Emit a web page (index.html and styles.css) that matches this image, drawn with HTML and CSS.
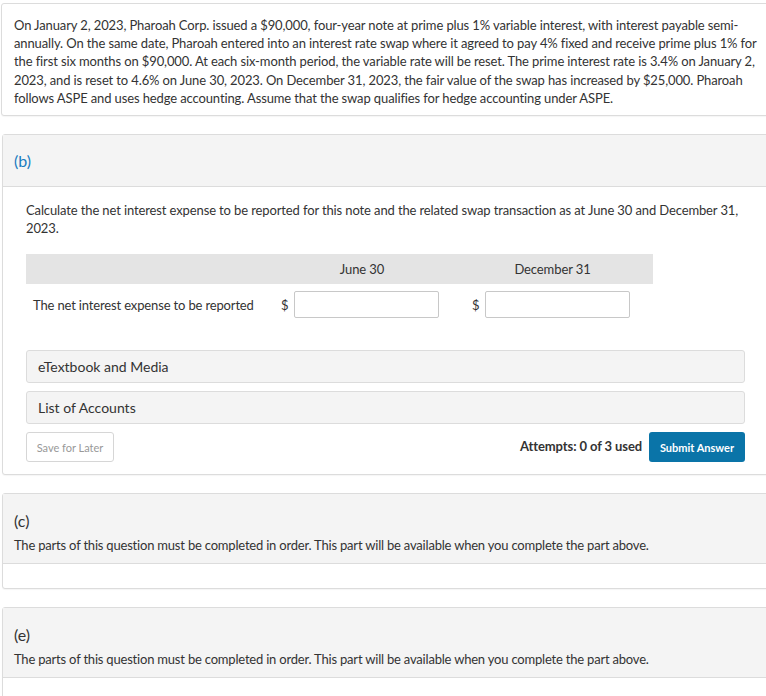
FILE: index.html
```html
<!DOCTYPE html>
<html>
<head>
<meta charset="utf-8">
<link rel="stylesheet" href="styles.css">
</head>
<body>
<div class="page">
  <div class="card intro">
    On January 2, 2023, Pharoah Corp. issued a $90,000, four-year note at prime plus 1% variable interest, with interest payable semi-annually. On the same date, Pharoah entered into an interest rate swap where it agreed to pay 4% fixed and receive prime plus 1% for the first six months on $90,000. At each six-month period, the variable rate will be reset. The prime interest rate is 3.4% on January 2, 2023, and is reset to 4.6% on June 30, 2023. On December 31, 2023, the fair value of the swap has increased by $25,000. Pharoah follows ASPE and uses hedge accounting. Assume that the swap qualifies for hedge accounting under ASPE.
  </div>

  <div class="card part">
    <div class="part-head"><span class="part-label active">(b)</span></div>
    <div class="part-body">
      <p class="question">Calculate the net interest expense to be reported for this note and the related swap transaction as at June 30 and December 31, 2023.</p>
      <div class="table">
        <div class="thead">
          <div></div>
          <div class="th">June 30</div>
          <div class="th">December 31</div>
        </div>
        <div class="trow">
          <div class="row-label">The net interest expense to be reported</div>
          <div class="cell c2"><span class="dollar">$</span><input class="field" type="text"></div>
          <div class="cell c3"><span class="dollar">$</span><input class="field" type="text"></div>
        </div>
      </div>
      <div class="bar first">eTextbook and Media</div>
      <div class="bar">List of Accounts</div>
      <div class="actions">
        <button class="btn-save">Save for Later</button>
        <div class="right">
          <span class="attempts">Attempts: 0 of 3 used</span>
          <button class="btn-submit">Submit Answer</button>
        </div>
      </div>
    </div>
  </div>

  <div class="card part locked">
    <div class="part-head locked-head">
      <div class="part-label">(c)</div>
      <div class="locked-text">The parts of this question must be completed in order. This part will be available when you complete the part above.</div>
    </div>
    <div class="locked-body"></div>
  </div>

  <div class="card part locked">
    <div class="part-head locked-head">
      <div class="part-label">(e)</div>
      <div class="locked-text">The parts of this question must be completed in order. This part will be available when you complete the part above.</div>
    </div>
    <div class="locked-body"></div>
  </div>
</div>
</body>
</html>
```

FILE: styles.css
```css
html, body {
  margin: 0;
  padding: 0;
  overflow: hidden;
  background: #fff;
}
body {
  font-family: Lato, "Liberation Sans", sans-serif;
  color: #333;
  font-size: 13px;
}
.page {
  padding: 3px 0 0 1px;
  display: flex;
  flex-direction: column;
  gap: 18px;
  width: 768px;
}
.card {
  border: 1px solid #dcdcdc;
  border-radius: 3px;
  background: #fff;
  box-shadow: 0 1px 1px rgba(0,0,0,0.04);
}
.intro {
  padding: 12px 8px 8px 12px;
  line-height: 18.2px;
  font-size: 13px;
  letter-spacing: -0.12px;
}
.part {
  margin-left: 1px;
}
.part-head {
  background: #f4f4f4;
  border-bottom: 1px solid #dcdcdc;
  padding: 15px 11px 14px;
}
.part-label {
  font-size: 16px;
  line-height: 22px;
  color: #333;
}
.part-label.active {
  color: #1b7cc0;
}
.part-body {
  padding: 14px 23px 12px 23px;
}
.question {
  margin: 0;
  line-height: 18px;
  font-size: 13px;
  letter-spacing: -0.12px;
}
.table {
  margin-top: 17px;
  width: 627px;
}
.thead, .trow {
  display: grid;
  grid-template-columns: 246px 180px 201px;
}
.thead {
  background: #e4e4e4;
  height: 30px;
  align-items: center;
}
.th {
  text-align: center;
  font-size: 13px;
  letter-spacing: -0.1px;
}
.trow {
  align-items: center;
  padding-top: 7px;
}
.row-label {
  padding-left: 7px;
  font-size: 13px;
  letter-spacing: -0.15px;
}
.cell {
  display: flex;
  align-items: center;
}
.c2 { padding-left: 9px; }
.c3 { padding-left: 20px; }
.dollar {
  width: 13px;
  font-size: 13px;
}
.field {
  box-sizing: border-box;
  width: 145px;
  height: 27px;
  border: 1px solid #c8c8c8;
  border-radius: 2px;
  margin: 0;
  padding: 0 6px;
  background: #fff;
}
.bar {
  margin-top: 8px;
  background: #f4f4f4;
  border: 1px solid #dcdcdc;
  border-radius: 3px;
  height: 33px;
  box-sizing: border-box;
  padding-left: 11px;
  display: flex;
  align-items: center;
  font-size: 14px;
  color: #333;
}
.bar.first {
  margin-top: 32px;
}
.actions {
  margin-top: 8px;
  display: flex;
  justify-content: space-between;
  align-items: center;
}
.btn-save {
  box-sizing: border-box;
  height: 30px;
  width: 88px;
  border: 1px solid #d6d6d6;
  border-radius: 3px;
  background: #fff;
  color: #999;
  font-family: Lato, "Liberation Sans", sans-serif;
  font-size: 11px;
  padding: 0;
}
.right {
  display: flex;
  align-items: center;
  gap: 7px;
}
.attempts {
  font-size: 13px;
  font-weight: 700;
  color: #333;
  margin-top: -3px;
  letter-spacing: -0.1px;
}
.btn-submit {
  box-sizing: border-box;
  height: 30px;
  width: 96px;
  border: none;
  border-radius: 3px;
  background: #0a74a8;
  color: #fff;
  font-family: Lato, "Liberation Sans", sans-serif;
  font-size: 11px;
  font-weight: 700;
  padding: 0;
}
.locked-head {
  padding: 16px 11px 9px;
}
.locked-text {
  margin-top: 4px;
  font-size: 13px;
  line-height: 18px;
  letter-spacing: -0.2px;
}
.locked-body {
  height: 24px;
}
```
